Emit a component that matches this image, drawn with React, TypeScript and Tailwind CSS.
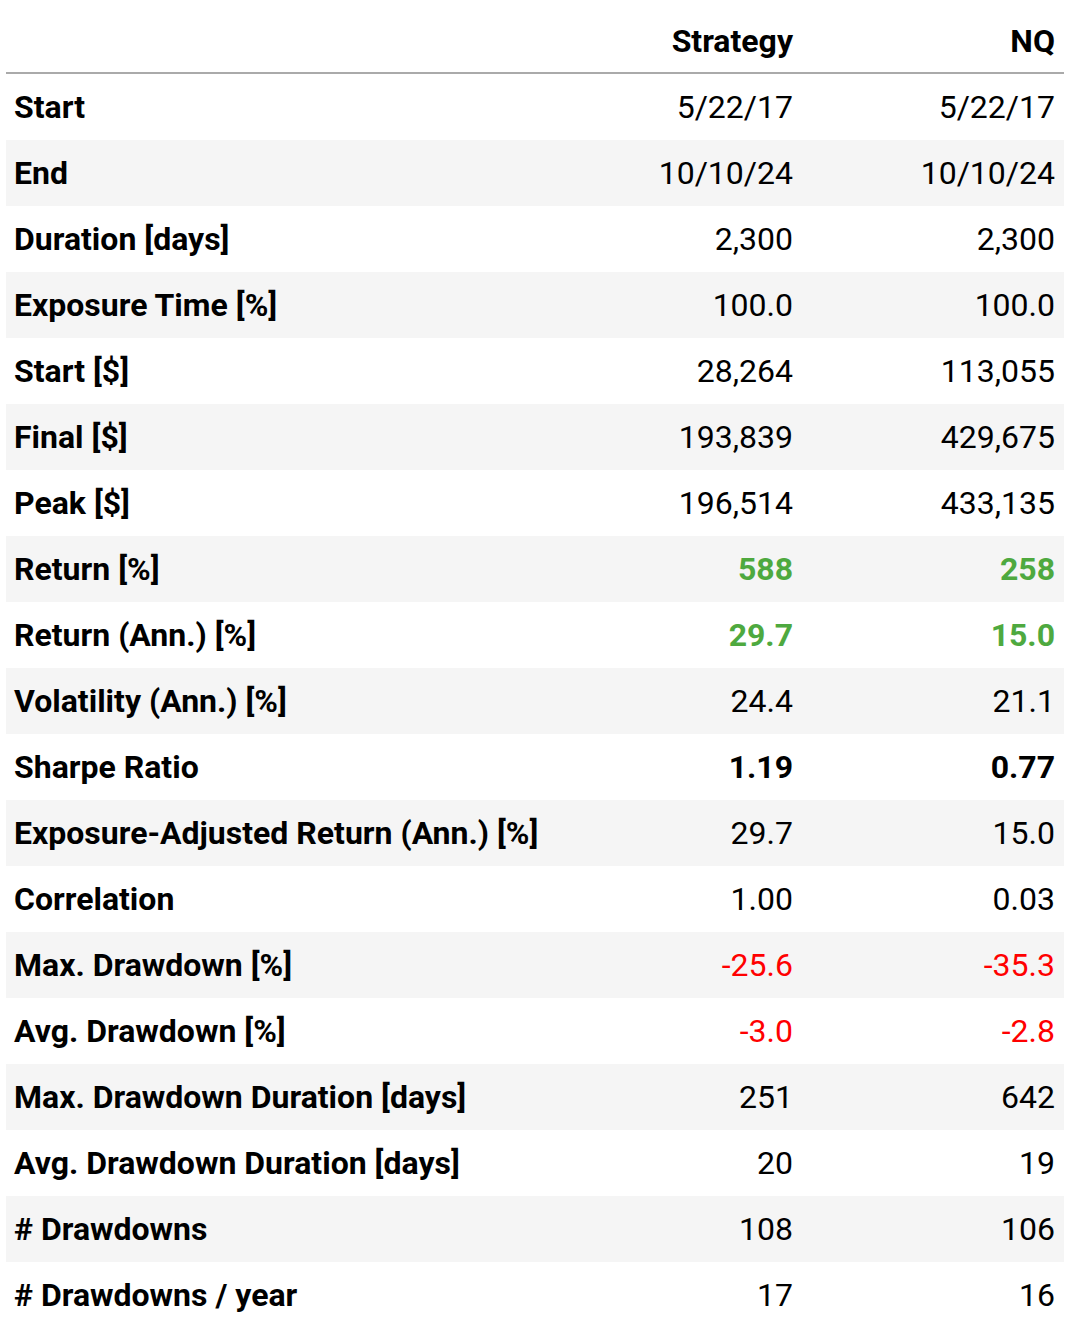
const rows: { label: string; a: string; b: string; tone?: "green" | "red" | "bold" }[] = [
  { label: "Start", a: "5/22/17", b: "5/22/17" },
  { label: "End", a: "10/10/24", b: "10/10/24" },
  { label: "Duration [days]", a: "2,300", b: "2,300" },
  { label: "Exposure Time [%]", a: "100.0", b: "100.0" },
  { label: "Start [$]", a: "28,264", b: "113,055" },
  { label: "Final [$]", a: "193,839", b: "429,675" },
  { label: "Peak [$]", a: "196,514", b: "433,135" },
  { label: "Return [%]", a: "588", b: "258", tone: "green" },
  { label: "Return (Ann.) [%]", a: "29.7", b: "15.0", tone: "green" },
  { label: "Volatility (Ann.) [%]", a: "24.4", b: "21.1" },
  { label: "Sharpe Ratio", a: "1.19", b: "0.77", tone: "bold" },
  { label: "Exposure-Adjusted Return (Ann.) [%]", a: "29.7", b: "15.0" },
  { label: "Correlation", a: "1.00", b: "0.03" },
  { label: "Max. Drawdown [%]", a: "-25.6", b: "-35.3", tone: "red" },
  { label: "Avg. Drawdown [%]", a: "-3.0", b: "-2.8", tone: "red" },
  { label: "Max. Drawdown Duration [days]", a: "251", b: "642" },
  { label: "Avg. Drawdown Duration [days]", a: "20", b: "19" },
  { label: "# Drawdowns", a: "108", b: "106" },
  { label: "# Drawdowns / year", a: "17", b: "16" },
]

const toneClass = {
  green: "font-bold text-[#4ea93f]",
  red: "text-[#ff0000]",
  bold: "font-bold text-black",
}

export default function App() {
  return (
    <div className="min-h-[1342px] bg-white px-[6px] font-['Roboto',sans-serif] text-[32px] text-black">
      <div className="grid h-[74px] grid-cols-[1fr_260px_262px] items-center border-b-2 border-[#aaaaaa] pt-[10px] font-bold">
        <div />
        <div className="pr-[9px] text-right">Strategy</div>
        <div className="pr-[9px] text-right">NQ</div>
      </div>
      {rows.map((row, i) => {
        const tone = row.tone ? toneClass[row.tone] : ""
        return (
          <div
            key={i}
            className={`grid h-[66px] grid-cols-[1fr_260px_262px] items-center ${i % 2 === 1 ? "bg-[#f5f5f5]" : "bg-white"}`}
          >
            <div className="pl-[8px] font-bold whitespace-nowrap">{row.label}</div>
            <div className={`pr-[9px] text-right ${tone}`}>{row.a}</div>
            <div className={`pr-[9px] text-right ${tone}`}>{row.b}</div>
          </div>
        )
      })}
    </div>
  )
}
